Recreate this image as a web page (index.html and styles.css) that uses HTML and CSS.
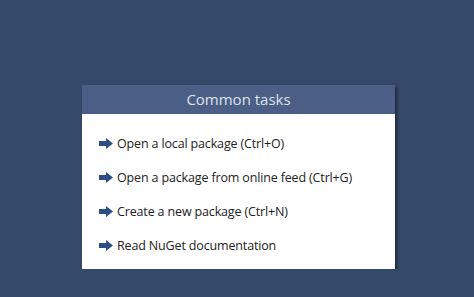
FILE: index.html
```html
<!DOCTYPE html>
<html lang="en">
<head>
    <meta charset="UTF-8">
    <title>NuGet Package Explorer</title>
    <link rel="stylesheet" href="styles.css">
</head>
<body>
  <div class="start-page">
    <div class="tasks-card">
      <div class="tasks-header">Common tasks</div>
      <ul class="tasks-list">
        <li><svg class="arrow" viewBox="0 0 14 11"><path d="M0 3H7V0L14 5.5L7 11V8H0Z"/></svg><span>Open a local package (Ctrl+O)</span></li>
        <li><svg class="arrow" viewBox="0 0 14 11"><path d="M0 3H7V0L14 5.5L7 11V8H0Z"/></svg><span>Open a package from online feed (Ctrl+G)</span></li>
        <li><svg class="arrow" viewBox="0 0 14 11"><path d="M0 3H7V0L14 5.5L7 11V8H0Z"/></svg><span>Create a new package (Ctrl+N)</span></li>
        <li><svg class="arrow" viewBox="0 0 14 11"><path d="M0 3H7V0L14 5.5L7 11V8H0Z"/></svg><span>Read NuGet documentation</span></li>
      </ul>
    </div>
  </div>
</body>
</html>
```

FILE: styles.css
```css
/* Base */
body {
    margin: 0;
    padding: 0;
    background-color: #35496a;
    font-family: 'Open Sans', 'Noto Sans', sans-serif;
}

.start-page {
    padding: 85px 0 0 82px;
}

/* Card */
.tasks-card {
    width: 313px;
    height: 184px;
    background-color: #fff;
    box-shadow: 2px 2px 3px rgba(0,0,0,0.45);
}

.tasks-header {
    height: 29px;
    line-height: 29px;
    background-color: #4a5e86;
    color: #dde3ec;
    text-align: center;
    font-size: 15px;
}

.tasks-list {
    list-style: none;
    margin: 0;
    padding: 12px 0 0 17px;
}

.tasks-list li {
    display: flex;
    align-items: center;
    gap: 4px;
    height: 34px;
    color: #222;
    font-size: 12.5px;
    letter-spacing: -0.15px;
}

.arrow {
    width: 14px;
    height: 11px;
    fill: #2c4d86;
}
```
